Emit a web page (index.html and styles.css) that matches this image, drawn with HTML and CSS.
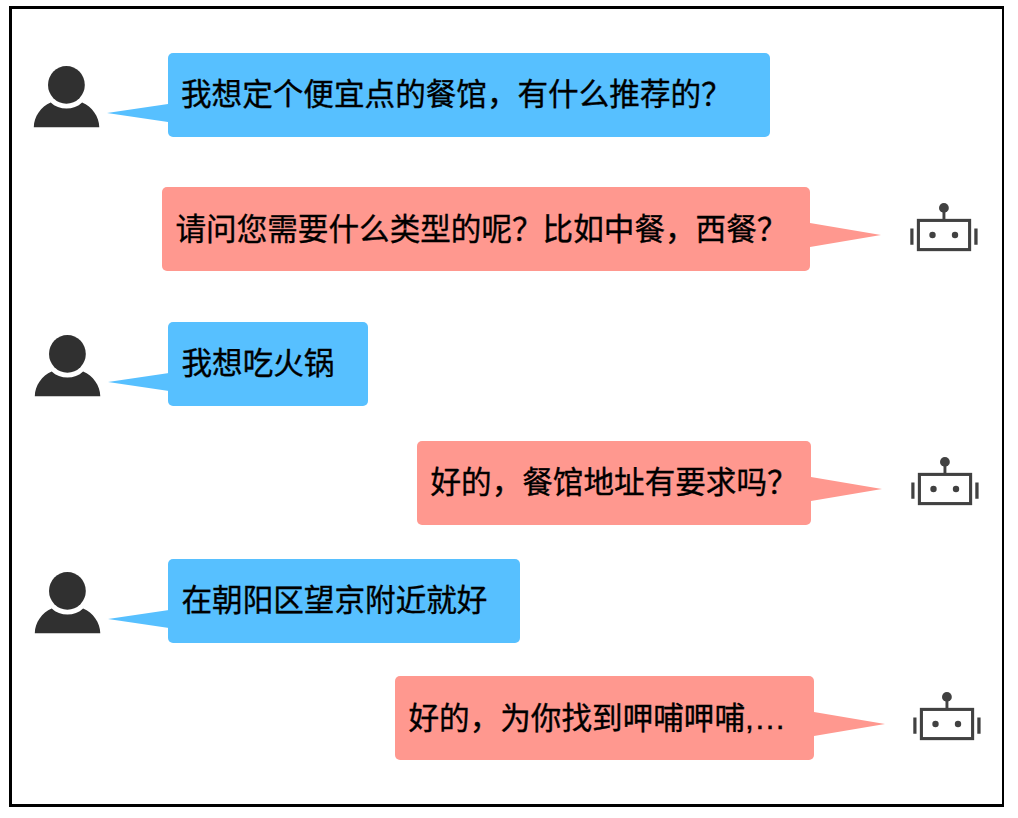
FILE: index.html
```html
<!DOCTYPE html>
<html lang="zh-CN">
<head>
<meta charset="utf-8">
<title>餐馆预订对话</title>
<link rel="stylesheet" href="styles.css">
</head>
<body>
<svg class="defs" width="0" height="0" aria-hidden="true">
  <symbol id="person" viewBox="0 0 67 62">
    <ellipse cx="33.4" cy="18.9" rx="18.4" ry="18.8"/>
    <path d="M.8 61.2C.9 51 8 40.5 17.7 36.6C26 44.6 41 44.6 49.1 36.6C59 40.5 66.2 51 66.3 61.2Z"/>
  </symbol>
  <symbol id="robot" viewBox="0 0 69 49">
    <circle cx="33.9" cy="4.9" r="4.9"/>
    <path d="M32.5 8h2.9v9h-2.9zM.3 25.6h3.2v16.2h-3.2zM64.3 25.6h3.3v16.2h-3.3z"/>
    <rect x="8.4" y="17.4" width="51.2" height="29.2" fill="none" stroke="currentColor" stroke-width="3.1"/>
    <circle cx="22.5" cy="32" r="3.2"/>
    <circle cx="45" cy="32" r="3.2"/>
  </symbol>
</svg>
<main class="frame">
  <div class="row user first">
    <svg class="person"><use href="#person"/></svg>
    <svg class="tail-left" viewBox="0 0 61 18"><path d="M0 9L61 0V18Z"/></svg>
    <p class="bubble w1">我想定个便宜点的餐馆，有什么推荐的？</p>
  </div>
  <div class="row bot second">
    <p class="bubble w2">请问您需要什么类型的呢？比如中餐，西餐？</p>
    <svg class="tail-right" viewBox="0 0 71 24"><path d="M0 0L71 12L0 24Z"/></svg>
    <svg class="robot"><use href="#robot"/></svg>
  </div>
  <div class="row user third">
    <svg class="person"><use href="#person"/></svg>
    <svg class="tail-left" viewBox="0 0 61 18"><path d="M0 9L61 0V18Z"/></svg>
    <p class="bubble w3">我想吃火锅</p>
  </div>
  <div class="row bot fourth">
    <p class="bubble w4">好的，餐馆地址有要求吗？</p>
    <svg class="tail-right" viewBox="0 0 71 24"><path d="M0 0L71 12L0 24Z"/></svg>
    <svg class="robot"><use href="#robot"/></svg>
  </div>
  <div class="row user fifth">
    <svg class="person"><use href="#person"/></svg>
    <svg class="tail-left" viewBox="0 0 61 18"><path d="M0 9L61 0V18Z"/></svg>
    <p class="bubble w5">在朝阳区望京附近就好</p>
  </div>
  <div class="row bot sixth">
    <p class="bubble w6">好的，为你找到呷哺呷哺<span class="latin">,…</span></p>
    <svg class="tail-right" viewBox="0 0 71 24"><path d="M0 0L71 12L0 24Z"/></svg>
    <svg class="robot"><use href="#robot"/></svg>
  </div>
</main>
</body>
</html>
```

FILE: styles.css
```css
* { box-sizing: border-box; }

body {
  margin: 0;
  padding: 6px 14px 11px 9px;
  height: 818px;
  background: #fff;
  color: #000;
  font-family: "Noto Sans CJK SC", sans-serif;
  overflow: hidden;
}

.defs { display: block; height: 0; }

.frame {
  height: 801px;
  border: 3px solid #000;
  border-right-width: 2px;
  display: flex;
  flex-direction: column;
}

.row {
  display: flex;
  align-items: flex-start;
  height: 84px;
  flex: none;
}

.user { padding-left: 22px; color: #57c0ff; }
.bot { justify-content: flex-end; color: #ff988f; }

.first { margin-top: 44px; padding-left: 21px; }
.second { margin-top: 50px; padding-right: 23px; }
.third { margin-top: 50.6px; }
.fourth { margin-top: 35.4px; padding-right: 22px; }
.fifth { margin-top: 34px; }
.sixth { margin-top: 33px; padding-right: 20px; }

.bubble {
  margin: 0;
  height: 84px;
  padding-left: 13.5px;
  border-radius: 5px;
  background: currentColor;
  font-size: 30.6px;
  line-height: 79px;
  white-space: nowrap;
  -webkit-text-fill-color: #000;
  -webkit-text-stroke: 0.35px #000;
}

.w1 { width: 602.5px; }
.w2 { width: 648px; line-height: 81px; }
.w3 { width: 200px; }
.w4 { width: 394px; }
.w5 { width: 351.5px; }
.w6 { width: 419px; line-height: 81px; }

.tail-left,
.tail-right { fill: currentColor; flex: none; }
.tail-left { width: 61px; height: 18px; margin: 51px -0.5px 0 7px; }
.third .tail-left,
.fifth .tail-left { margin-right: -1px; }
.tail-right { width: 71px; height: 24px; margin: 36px 29px 0 0; }
.sixth .tail-right { margin-right: 28px; }

.person { width: 67px; height: 62px; margin-top: 13px; color: #303030; fill: currentColor; flex: none; }
.robot { width: 69px; height: 49px; margin-top: 16px; color: #414141; fill: currentColor; flex: none; }

.latin { font-family: "Liberation Sans", sans-serif; font-size: 32px; line-height: 1; }
```
